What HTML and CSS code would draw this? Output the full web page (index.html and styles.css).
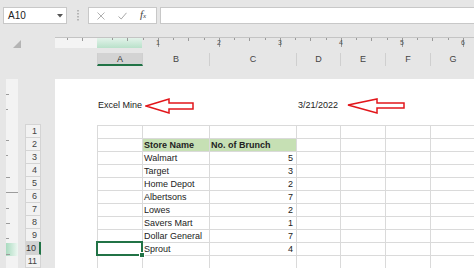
FILE: index.html
```html
<!DOCTYPE html>
<html>
<head>
<meta charset="utf-8">
<link rel="stylesheet" href="styles.css">
</head>
<body>
<div class="app">
  <div class="fbar">
    <div class="namebox"><span>A10</span><svg class="caret" width="6" height="4" viewBox="0 0 6 4"><polygon points="0,0 6,0 3,3.5" fill="#555"/></svg></div>
    <div class="grip"><svg width="2" height="11" viewBox="0 0 2 11"><rect x="0" y="0" width="2" height="1.5" fill="#b5b5b5"/><rect x="0" y="3" width="2" height="1.5" fill="#b5b5b5"/><rect x="0" y="6" width="2" height="1.5" fill="#b5b5b5"/><rect x="0" y="9" width="2" height="1.5" fill="#b5b5b5"/></svg></div>
    <div class="fxbox">
      <svg class="ix" width="8" height="8" viewBox="0 0 8 8"><path d="M0.5 0.5 L7.5 7.5 M7.5 0.5 L0.5 7.5" stroke="#b0b0b0" stroke-width="1" fill="none"/></svg>
      <svg class="iok" width="9" height="8" viewBox="0 0 9 8"><path d="M0.5 4.5 L3.2 7 L8.5 0.8" stroke="#a8a8a8" stroke-width="1" fill="none"/></svg>
      <span class="fx"><i>f</i><span class="fxx">x</span></span>
    </div>
    <div class="finput"></div>
  </div>

  <div class="rulerrow">
    <div class="corner"><svg width="8" height="8" viewBox="0 0 8 8"><polygon points="8,0 8,8 0,8" fill="#b4b4b4"/></svg></div>
    <div class="hruler">
      <svg width="419" height="11" viewBox="0 0 419 11">
        <defs>
          <linearGradient id="gh" x1="0" y1="0" x2="0" y2="1">
            <stop offset="0" stop-color="#e3f3ea"/>
            <stop offset="1" stop-color="#b9e1ca"/>
          </linearGradient>
        </defs>
        <rect x="0" y="1" width="42" height="10" fill="#f4f4f4"/>
        <rect x="42" y="1" width="45" height="10" fill="url(#gh)"/>
        <line x1="0" y1="0.5" x2="419" y2="0.5" stroke="#c4c4c4"/>
        <g stroke="#9a9a9a" stroke-width="1">
          <line x1="12.5" y1="1" x2="12.5" y2="3"/><line x1="27.5" y1="1" x2="27.5" y2="4"/>
          <line x1="57.5" y1="1" x2="57.5" y2="3"/><line x1="72.5" y1="1" x2="72.5" y2="4"/><line x1="88.5" y1="1" x2="88.5" y2="3"/>
          <line x1="118.5" y1="1" x2="118.5" y2="3"/><line x1="133.5" y1="1" x2="133.5" y2="4"/><line x1="149.5" y1="1" x2="149.5" y2="3"/>
          <line x1="179.5" y1="1" x2="179.5" y2="3"/><line x1="194.5" y1="1" x2="194.5" y2="4"/><line x1="210.5" y1="1" x2="210.5" y2="3"/>
          <line x1="240.5" y1="1" x2="240.5" y2="3"/><line x1="255.5" y1="1" x2="255.5" y2="4"/><line x1="271.5" y1="1" x2="271.5" y2="3"/>
          <line x1="301.5" y1="1" x2="301.5" y2="3"/><line x1="316.5" y1="1" x2="316.5" y2="4"/><line x1="332.5" y1="1" x2="332.5" y2="3"/>
          <line x1="362.5" y1="1" x2="362.5" y2="3"/><line x1="377.5" y1="1" x2="377.5" y2="4"/><line x1="393.5" y1="1" x2="393.5" y2="3"/>
          <line x1="103.5" y1="1" x2="103.5" y2="10"/>
          <line x1="164.5" y1="1" x2="164.5" y2="10"/>
          <line x1="225.5" y1="1" x2="225.5" y2="10"/>
          <line x1="286.5" y1="1" x2="286.5" y2="10"/>
          <line x1="347.5" y1="1" x2="347.5" y2="10"/>
          <line x1="408.5" y1="1" x2="408.5" y2="10"/>
        </g>
        <g class="rnum" fill="#555" font-size="7">
          <text x="101" y="8">1</text>
          <text x="162" y="8">2</text>
          <text x="223" y="8">3</text>
          <text x="284" y="8">4</text>
          <text x="345" y="8">5</text>
          <text x="406" y="8">6</text>
        </g>
      </svg>
    </div>
  </div>

  <div class="colheads">
    <div class="ch a sel">A</div>
    <div class="ch b">B</div>
    <div class="ch c3">C</div>
    <div class="ch d">D</div>
    <div class="ch e">E</div>
    <div class="ch f">F</div>
    <div class="ch g">G</div>
  </div>

  <div class="main">
    <div class="side">
      <div class="vruler">
        <svg width="12" height="189" viewBox="0 0 12 189">
          <defs>
            <linearGradient id="gv" x1="0" y1="0" x2="1" y2="0">
              <stop offset="0" stop-color="#a9dbbf"/>
              <stop offset="1" stop-color="#eef7f2"/>
            </linearGradient>
          </defs>
          <rect x="0" y="164" width="12" height="13" fill="url(#gv)"/>
          <g stroke="#9c9c9c" stroke-width="1">
            <line x1="0" y1="15.5" x2="3" y2="15.5"/>
            <line x1="0" y1="30.5" x2="2" y2="30.5"/>
            <line x1="0" y1="61.5" x2="3" y2="61.5"/>
            <line x1="0" y1="76.5" x2="2" y2="76.5"/>
            <line x1="0" y1="98.5" x2="4" y2="98.5"/>
            <line x1="0" y1="113.5" x2="12" y2="113.5"/>
            <line x1="0" y1="129.5" x2="3" y2="129.5"/>
            <line x1="0" y1="144.5" x2="4" y2="144.5"/>
            <line x1="0" y1="159.5" x2="3" y2="159.5"/>
            <line x1="0" y1="175.5" x2="4" y2="175.5"/>
          </g>
        </svg>
      </div>
      <div class="rowheads">
        <div class="rh">1</div>
        <div class="rh">2</div>
        <div class="rh">3</div>
        <div class="rh">4</div>
        <div class="rh">5</div>
        <div class="rh">6</div>
        <div class="rh">7</div>
        <div class="rh">8</div>
        <div class="rh">9</div>
        <div class="rh sel">10</div>
        <div class="rh">11</div>
      </div>
    </div>

    <div class="page">
      <div class="hdr">
        <div class="hcell">Excel Mine</div>
        <div class="hcell"><svg class="arrow1" width="50" height="17" viewBox="0 0 50 17"><polygon points="1,9 24,2 24,6 48,6 48,12 24,12 24,16" fill="none" stroke="#e2161b" stroke-width="1.5"/></svg></div>
        <div class="hcell"></div>
        <div class="hcell">3/21/2022</div>
        <div class="hcell"><svg class="arrow2" width="59" height="17" viewBox="0 0 59 17"><polygon points="1,8 30,2 30,6 57,6 57,11 30,11 30,16" fill="none" stroke="#e2161b" stroke-width="1.5"/></svg></div>
      </div>

      <div class="grid">
        <div class="c"></div><div class="c"></div><div class="c"></div><div class="c"></div><div class="c"></div><div class="c"></div><div class="c"></div>
        <div class="c"></div><div class="c h">Store Name</div><div class="c h">No. of Brunch</div><div class="c"></div><div class="c"></div><div class="c"></div><div class="c"></div>
        <div class="c"></div><div class="c">Walmart</div><div class="c n">5</div><div class="c"></div><div class="c"></div><div class="c"></div><div class="c"></div>
        <div class="c"></div><div class="c">Target</div><div class="c n">3</div><div class="c"></div><div class="c"></div><div class="c"></div><div class="c"></div>
        <div class="c"></div><div class="c">Home Depot</div><div class="c n">2</div><div class="c"></div><div class="c"></div><div class="c"></div><div class="c"></div>
        <div class="c"></div><div class="c">Albertsons</div><div class="c n">7</div><div class="c"></div><div class="c"></div><div class="c"></div><div class="c"></div>
        <div class="c"></div><div class="c">Lowes</div><div class="c n">2</div><div class="c"></div><div class="c"></div><div class="c"></div><div class="c"></div>
        <div class="c"></div><div class="c">Savers Mart</div><div class="c n">1</div><div class="c"></div><div class="c"></div><div class="c"></div><div class="c"></div>
        <div class="c"></div><div class="c">Dollar General</div><div class="c n">7</div><div class="c"></div><div class="c"></div><div class="c"></div><div class="c"></div>
        <div class="c sel"></div><div class="c">Sprout</div><div class="c n">4</div><div class="c"></div><div class="c"></div><div class="c"></div><div class="c"></div>
        <div class="c"></div><div class="c"></div><div class="c"></div><div class="c"></div><div class="c"></div><div class="c"></div><div class="c"></div>
      </div>
    </div>
  </div>
</div>
</body>
</html>
```

FILE: styles.css
```css
* { box-sizing: border-box; }
html, body { margin: 0; padding: 0; }
body {
  width: 474px;
  height: 268px;
  overflow: hidden;
  background: #e6e6e6;
  font-family: "Liberation Sans", Arial, sans-serif;
  color: #222;
}
.app { width: 474px; height: 268px; overflow: hidden; }

/* formula bar */
.fbar { display: flex; height: 30px; padding: 7px 0 0 3px; }
.namebox {
  width: 64px; height: 17px; background: #fff; border: 1px solid #c8c8c8;
  display: flex; align-items: center; justify-content: space-between;
  padding: 0 3px 0 4px; font-size: 10px; color: #222;
}
.caret { display: block; }
.grip { width: 21px; height: 17px; display: flex; align-items: center; justify-content: center; }
.grip svg { display: block; }
.fxbox {
  width: 69px; height: 17px; background: #fff; border: 1px solid #c8c8c8;
  display: flex; align-items: center;
}
.ix { display: block; margin-left: 8px; }
.iok { display: block; margin-left: 13px; }
.fx {
  margin-left: 13px; font-family: "Liberation Serif", serif; font-size: 11px;
  color: #444; line-height: 11px;
}
.fxx { font-size: 7px; font-style: italic; }
.finput {
  flex: 1; margin-left: 3px; height: 17px; background: #fff;
  border: 1px solid #c8c8c8; border-right: none;
}

/* ruler row */
.rulerrow { display: flex; height: 23px; }
.corner { width: 55px; padding: 10px 0 0 13px; }
.corner svg { display: block; }
.hruler { flex: 1; margin-top: 7px; height: 11px; }
.hruler svg { display: block; }
.rnum { font-family: "Liberation Sans", Arial, sans-serif; }

/* column headers */
.colheads { display: flex; height: 13px; padding-left: 97px; font-size: 9px; color: #444; }
.ch {
  height: 13px; line-height: 12px; text-align: center;
  border-right: 1px solid #cfcfcf; flex: none;
}
.ch.a { width: 46px; border-left: 1px solid #cfcfcf; }
.ch.b { width: 67px; }
.ch.c3 { width: 87px; }
.ch.d { width: 44px; }
.ch.e { width: 45px; }
.ch.f { width: 45px; }
.ch.g { width: 45px; }
.ch.sel { background: #d3d3d3; border-bottom: 2px solid #217346; color: #333; }

/* main area */
.main { display: flex; margin-top: 13px; height: 189px; }
.side { width: 55px; flex: none; display: flex; }
.vruler { width: 12px; margin-left: 6px; background: #f3f3f3; }
.vruler svg { display: block; }
.rowheads { margin-left: 7px; width: 16px; padding-top: 46px; }
.rh {
  height: 13px; line-height: 12px; font-size: 9px; color: #444;
  text-align: right; padding-right: 3px;
  background: #f2f2f2;
  border-left: 1px solid #d4d4d4; border-right: 1px solid #d4d4d4;
  border-bottom: 1px solid #d4d4d4;
}
.rh:first-child { border-top: 1px solid #d4d4d4; height: 14px; line-height: 13px; margin-top: -1px; }
.rh.sel { background: #d3d3d3; border-right: 2px solid #217346; color: #333; }

.page {
  flex: 1; background: #fff; padding: 20px 0 0 42px; overflow: hidden;
}
.hdr {
  display: grid;
  grid-template-columns: 46px 67px 87px 44px 45px 45px 45px;
  height: 13px; margin-bottom: 13px;
  font-size: 9px; line-height: 13px; color: #222;
}
.hcell { padding-left: 1px; white-space: nowrap; overflow: visible; height: 13px; }
.hcell svg { display: block; margin-top: -2px; }
.arrow1 { margin-left: 1px; }
.arrow2 { margin-left: 5px; }

.grid {
  display: grid;
  grid-template-columns: 45px 67px 87px 44px 45px 45px 45px;
  width: 379px;
  border-left: 1px solid #dadada; border-top: 1px solid #dadada;
  font-size: 9px; color: #222;
}
.c {
  height: 13px; line-height: 12px; padding-left: 1px;
  border-right: 1px solid #dadada; border-bottom: 1px solid #dadada;
  white-space: nowrap; overflow: hidden;
}
.c.n { text-align: right; padding-right: 3px; }
.c.h { background: #c6e0b4; font-weight: bold; }
.c.sel { position: relative; overflow: visible; }
.c.sel::after {
  content: ""; position: absolute; left: -2px; top: -2px; right: -1px; bottom: -1px;
  border: 2px solid #217346;
}
.c.sel::before {
  content: ""; position: absolute; right: -3px; bottom: -3px; width: 4px; height: 4px;
  background: #217346; border: 1px solid #fff; z-index: 2;
}
```
